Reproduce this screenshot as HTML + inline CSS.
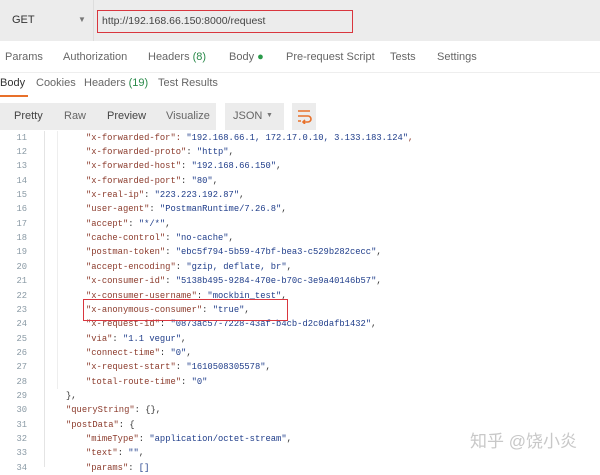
<!DOCTYPE html>
<html><head><meta charset="utf-8"><style>
body{margin:0;width:600px;height:467px;overflow:hidden;background:#fff;font-family:"Liberation Sans",sans-serif;position:relative}
.a{position:absolute}
.t{font-size:11px;color:#666;position:absolute;top:51px}
.s{font-size:11px;color:#666;position:absolute;top:77px}
.code{position:absolute;left:0;top:131px;font-family:"Liberation Mono",monospace;font-size:8.8px;line-height:14.35px}
.ln{position:absolute;left:0;width:27px;text-align:right;color:#8a9aa5}
.k{color:#8b3a2b}.v{color:#1f3d8a}.p{color:#333}
.row{position:absolute;left:0;height:14.35px;white-space:pre}
</style></head><body>
<div class="a" style="left:0;top:0;width:600px;height:41px;background:#ececec"></div>
<div class="a" style="left:12px;top:14px;font-size:11px;color:#333">GET</div>
<div class="a" style="left:78px;top:15px;font-size:8px;color:#777">▼</div>
<div class="a" style="left:93px;top:0;width:1px;height:41px;background:#ddd"></div>
<div class="a" style="left:97px;top:10px;width:254px;height:21px;border:1.5px solid #d9363e"></div>
<div class="a" style="left:102px;top:15px;font-size:10.5px;color:#444">http://192.168.66.150:8000/request</div>
<div class="t" style="left:5px">Params</div>
<div class="t" style="left:63px">Authorization</div>
<div class="t" style="left:148px">Headers <span style="color:#2a8a4a">(8)</span></div>
<div class="t" style="left:229px">Body <span style="color:#2a9a4a">●</span></div>
<div class="t" style="left:286px">Pre-request Script</div>
<div class="t" style="left:390px">Tests</div>
<div class="t" style="left:437px">Settings</div>
<div class="a" style="left:0;top:72px;width:600px;height:1px;background:#eee"></div>
<div class="s" style="left:0;color:#333">Body</div>
<div class="s" style="left:36px">Cookies</div>
<div class="s" style="left:84px">Headers <span style="color:#2a8a4a">(19)</span></div>
<div class="s" style="left:158px">Test Results</div>
<div class="a" style="left:0;top:95px;width:28px;height:2px;background:#e8702a"></div>
<div class="a" style="left:0;top:103px;width:216px;height:27px;background:#ececec"></div>
<div class="a" style="left:14px;top:110px;font-size:11px;color:#444">Pretty</div>
<div class="a" style="left:64px;top:110px;font-size:11px;color:#666">Raw</div>
<div class="a" style="left:107px;top:110px;font-size:11px;color:#444">Preview</div>
<div class="a" style="left:166px;top:110px;font-size:11px;color:#666">Visualize</div>
<div class="a" style="left:225px;top:103px;width:59px;height:27px;background:#ececec"></div>
<div class="a" style="left:233px;top:110px;font-size:11px;color:#666">JSON</div>
<div class="a" style="left:266px;top:112px;font-size:7px;color:#777">▼</div>
<div class="a" style="left:292px;top:103px;width:24px;height:27px;background:#ececec"></div>
<svg class="a" style="left:296px;top:108px" width="16" height="16"><path d="M2 3h12M2 8h10a3 3 0 0 1 0 6H8M2 13h3M9 12l-2 2 2 2" stroke="#e8702a" stroke-width="1.6" fill="none"/></svg>
<div class="a" style="left:44px;top:131px;width:1px;height:336px;background:#e4e4e4"></div>
<div class="a" style="left:57px;top:131px;width:1px;height:258px;background:#eee"></div>
<div class="code">
<div class="row" style="top:0"><span class="ln">11</span><span style="position:absolute;left:86px;color:#8b3a2b">"x-forwarded-for": <span class="v">"192.168.66.1, 172.17.0.10, 3.133.183.124"</span>,</span></div>
</div>
<div class="code" id="c" style="top:145px"></div>
<div class="a" style="left:83px;top:299px;width:203px;height:20px;border:1.5px solid #d9363e"></div>
<div class="a" style="left:470px;top:427px;font-family:'Liberation Sans','Noto Sans CJK SC',sans-serif;font-size:17px;color:#c8c8c8">知乎 @饶小炎</div>
<script>
var L=[[2,'"x-forwarded-proto"','"http"',','],[2,'"x-forwarded-host"','"192.168.66.150"',','],[2,'"x-forwarded-port"','"80"',','],[2,'"x-real-ip"','"223.223.192.87"',','],[2,'"user-agent"','"PostmanRuntime/7.26.8"',','],[2,'"accept"','"*/*"',','],[2,'"cache-control"','"no-cache"',','],[2,'"postman-token"','"ebc5f794-5b59-47bf-bea3-c529b282cecc"',','],[2,'"accept-encoding"','"gzip, deflate, br"',','],[2,'"x-consumer-id"','"5138b495-9284-470e-b70c-3e9a40146b57"',','],[2,'"x-consumer-username"','"mockbin_test"',','],[2,'"x-anonymous-consumer"','"true"',','],[2,'"x-request-id"','"0873ac57-7228-43af-b4cb-d2c0dafb1432"',','],[2,'"via"','"1.1 vegur"',','],[2,'"connect-time"','"0"',','],[2,'"x-request-start"','"1610508305578"',','],[2,'"total-route-time"','"0"',''],[1,null,'},',''],[1,'"queryString"','{},',''],[1,'"postData"','{',''],[2,'"mimeType"','"application/octet-stream"',','],[2,'"text"','""',','],[2,'"params"','[]','']];
var h='';L.forEach(function(r,i){var x=r[0]==2?86:66;var c=r[1]?'<span class="k">'+r[1]+'</span><span class="p">: </span><span class="'+(r[0]==1?'p':'v')+'">'+r[2]+'</span><span class="p">'+r[3]+'</span>':'<span class="p">'+r[2]+'</span>';h+='<div class="row" style="top:'+(i*14.35)+'px"><span class="ln">'+(12+i)+'</span><span style="position:absolute;left:'+x+'px">'+c+'</span></div>';});document.getElementById('c').innerHTML=h;
</script>
</body></html>
